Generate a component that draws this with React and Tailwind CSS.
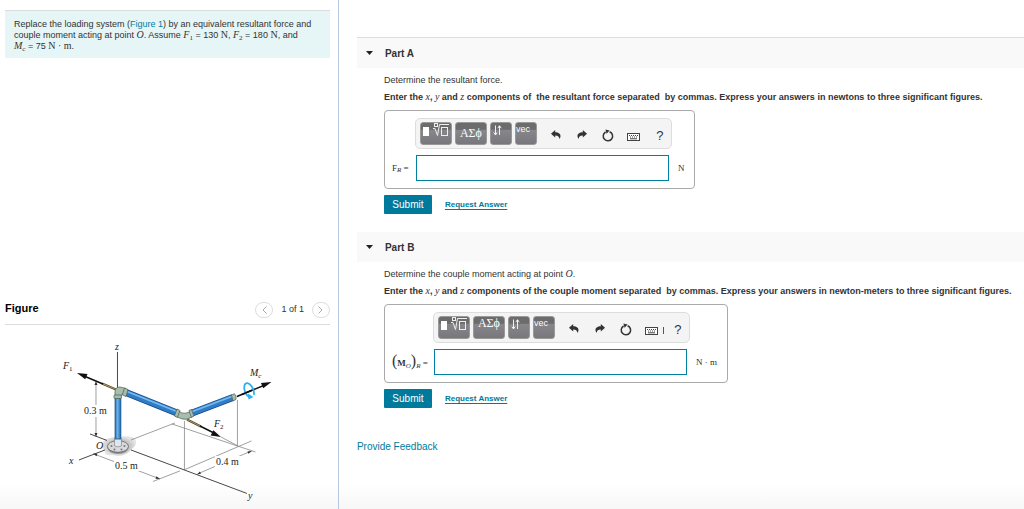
import React from 'react'

const Sym = ({ children, sub }) => (
  <span className="font-['Liberation_Serif',serif] text-[10px] leading-none font-normal">
    <i>{children}</i>
    {sub && <sub className="text-[7px] leading-[0px]">{sub}</sub>}
  </span>
)

const Unit = ({ children }) => (
  <span className="font-['Liberation_Serif',serif] text-[10px] leading-none">
    {children}
  </span>
)

const UndoIcon = ({ flip }) => (
  <svg
    width="10"
    height="10"
    viewBox="0 0 10 10"
    className={flip ? '-scale-x-100' : ''}
  >
    <path
      d="M0 3.8 4.200 0v2.200c3.400 0 5.600 1.700 5.300 4.400-.1 1-.5 1.700-1.300 2.400.2-2.200-1-3.600-4-3.600v2.200z"
      fill="#333"
    />
  </svg>
)

const ResetIcon = () => (
  <svg width="12" height="13" viewBox="0 0 12 13">
    <path
      d="M7.600 2.700A4.700 4.700 0 1 1 3.600 3"
      fill="none"
      stroke="#333"
      strokeWidth="1.500"
    />
    <path d="M3.400.4 7.600 1.400 4.600 4.800z" fill="#333" />
  </svg>
)

const KeyboardIcon = () => (
  <svg width="13" height="8" viewBox="0 0 13 8">
    <rect x="0.5" y="0.5" width="12" height="7" fill="#fff" stroke="#444" />
    <path
      d="M2 2.500h9M3 4h8"
      stroke="#444"
      strokeWidth="1"
      strokeDasharray="1 1"
    />
    <path d="M3 5.800h7" stroke="#444" strokeWidth="1" />
  </svg>
)

const TemplateIcon = () => (
  <svg width="28" height="16" viewBox="0 0 28 16">
    <rect x="1" y="4" width="6" height="9" fill="#fff" />
    <g fill="none" stroke="#eee" strokeWidth="1">
      <path d="M11 5.500h2l2.500 7 2-11H27" />
      <rect x="12.5" y="0.5" width="3" height="3" />
      <rect x="19.5" y="4.5" width="6" height="8" />
    </g>
  </svg>
)

const ArrowsIcon = () => (
  <svg width="9" height="11" viewBox="0 0 9 11">
    <path
      d="M2.500 0.500v9M0.800 7.500 2.500 10l1.700-2.500M6.500 10V1M4.800 3.200 6.500 0.700 8.200 3.200"
      fill="none"
      stroke="#fff"
      strokeWidth="0.9"
    />
  </svg>
)

const KEY =
  'flex h-[23px] rounded-[3px] border border-[#999] bg-linear-to-b from-[#6c6c6c] from-30% via-[#86868b] via-35% to-[#77777c] text-white'
const TOOL = 'flex w-[26px] items-center justify-center'

const Toolbar = ({ greekClass, divider }) => (
  <div className="flex h-[31px] items-center rounded-[5px] border border-[#ddd] bg-[#f4f4f4] pl-1">
    <div className="flex gap-[3px]">
      <button
        className={`${KEY} w-8 items-start justify-center`}
        aria-label="Templates"
      >
        <TemplateIcon />
      </button>
      <button
        className={`${KEY} ${greekClass} w-8 justify-center font-['Liberation_Serif',serif] text-[12px] leading-[13px]`}
      >
        ΑΣϕ
      </button>
      <button
        className={`${KEY} w-[22px] items-start pt-[2px] pl-[2px]`}
        aria-label="Arrows"
      >
        <ArrowsIcon />
      </button>
      <button
        className={`${KEY} w-[22px] items-start text-[9px] leading-[13px]`}
      >
        vec
      </button>
    </div>
    <div className="ml-[6px] flex h-[23px] pt-[3px] text-[#333]">
      <button className={TOOL} aria-label="Undo">
        <UndoIcon />
      </button>
      <button className={TOOL} aria-label="Redo">
        <UndoIcon flip />
      </button>
      <button className={TOOL} aria-label="Reset">
        <ResetIcon />
      </button>
      <button
        className={`${TOOL} relative pt-[3px]`}
        aria-label="Keyboard shortcuts"
      >
        <KeyboardIcon />
        {divider && (
          <span className="absolute top-2 right-px h-[7px] w-px bg-[#555]" />
        )}
      </button>
      <button className={`${TOOL} text-[13px]`} aria-label="Help">
        ?
      </button>
    </div>
  </div>
)

const Part = ({
  id,
  title,
  prompt,
  instructions,
  label,
  labelClass,
  unit,
  headerClass,
  greekClass,
  divider,
}) => (
  <section>
    <h2
      className={`${headerClass} flex items-center bg-[#f9f9f9] text-[10px] font-bold`}
    >
      <button className="flex w-7 items-center pl-[9px]" aria-label="Collapse">
        <svg width="7" height="4" viewBox="0 0 7 4">
          <path d="M0 0h7L3.500 4z" fill="#222" />
        </svg>
      </button>
      {title}
    </h2>
    <div className="pl-[27px] text-[9px] leading-[11px] whitespace-nowrap">
      <p className="mt-[7px] h-[11px]">{prompt}</p>
      <p className="mt-[6px] h-[11px] font-bold">{instructions}</p>
      <div className="mt-[7px] flex w-fit rounded-[4px] border border-[#aaa] py-[7px] pl-[7px]">
        <label
          htmlFor={id}
          className={`${labelClass} flex h-[26px] items-center self-end font-['Liberation_Serif',serif]`}
        >
          {label}
        </label>
        <div className="w-[257px]">
          <Toolbar greekClass={greekClass} divider={divider} />
          <div className="mt-[6px] pr-[3px] pl-px">
            <input
              id={id}
              type="text"
              className="block h-[26px] w-full border border-[#007fa3] bg-white px-1 text-[11px] outline-none"
            />
          </div>
        </div>
        <span className="flex h-[26px] items-center self-end pr-[10px] pl-[6px] font-['Liberation_Serif',serif] text-[9px]">
          {unit}
        </span>
      </div>
      <div className="mt-[6px] flex items-center gap-[13px]">
        <button className="h-[19px] w-12 rounded-[1px] bg-[#007a9c] text-[10px] text-white">
          Submit
        </button>
        <a
          href="#answer"
          className="text-[8px] font-bold text-[#007a9c] underline underline-offset-2"
        >
          Request Answer
        </a>
      </div>
    </div>
  </section>
)

const PipeFigure = () => (
  <svg
    viewBox="5 325 325 184"
    className="block h-auto w-full"
    role="img"
    aria-label="Pipe assembly with loads"
  >
    <defs>
      <linearGradient id="pipeV" x1="0" x2="1" y1="0" y2="0">
        <stop offset="0" stopColor="#1f65ad" />
        <stop offset="0.4" stopColor="#6db4ea" />
        <stop offset="1" stopColor="#2168ad" />
      </linearGradient>
      <radialGradient id="ground">
        <stop offset="0.5" stopColor="#bbb" />
        <stop offset="1" stopColor="#e4e4e4" />
      </radialGradient>
    </defs>

    {/* ground */}
    <path
      d="M102 445c1-6 8-8 14-8 8-1 19-2 20 4 1 4-3 7-6 10-5 5-12 6-17 4-6 1-9-1-8-4-2-1-3-4-3-6z"
      fill="url(#ground)"
    />

    {/* axes and dimension lines */}
    <g stroke="#333" strokeWidth="0.9" fill="none">
      <path d="M117.500 352v36" />
      <path d="M79 460l26-10" />
      <path d="M131 450l116 43.500" />
      <path d="M90 434l17 6.500" />
    </g>
    <g stroke="#777" strokeWidth="0.7" fill="none">
      <path d="M131 440l44-17M172 424l65.500 22M221 437l17 9M237.500 446l18 6" />
      <path d="M184.500 421v49M237.500 400v46M184 470l67.500-29" />
      <path d="M96 384v50M94 454l66 25M153 481.500l27-10.500M197.500 474l54-23" />
    </g>
    <g fill="#333">
      <path d="M96 381l-1.500 4h3zM96 437l-1.500-4h3z" />
      <path d="M93 453.500l4.500.3-1 2.400zM160 479l-4.500-.3 1-2.500z" />
      <path d="M197 474.500l3-3 1 2.200zM252 451l-4.500.5 1 2.200z" />
    </g>
    <g fill="#fff">
      <rect x="83" y="405" width="25" height="12" />
      <rect x="114" y="460" width="26" height="11" />
      <rect x="215" y="456" width="26" height="12" />
    </g>

    {/* flange */}
    <ellipse cx="118" cy="448" rx="10.500" ry="6" fill="#8c8f93" />
    <ellipse
      cx="118"
      cy="446.500"
      rx="10.500"
      ry="5.800"
      fill="#d7d9db"
      stroke="#555"
      strokeWidth="0.7"
    />
    <g fill="#777">
      <circle cx="111.500" cy="446" r="1" />
      <circle cx="114.500" cy="449.500" r="1" />
      <circle cx="121.500" cy="449.500" r="1" />
      <circle cx="124.500" cy="446" r="1" />
    </g>
    <path
      d="M114.500 439h7v7q-3.500 2-7 0z"
      fill="#dfe6ee"
      stroke="#777"
      strokeWidth="0.6"
    />

    {/* pipes */}
    <rect
      x="115"
      y="397"
      width="6"
      height="42"
      fill="url(#pipeV)"
      stroke="#174a80"
      strokeWidth="0.6"
    />
    <g fill="none">
      <path d="M126 392.500l51 20.500" stroke="#174a80" strokeWidth="7" />
      <path d="M126 392.500l51 20.500" stroke="#2f7cc8" strokeWidth="5.600" />
      <path d="M126.500 391.300l51 20.500" stroke="#78bcee" strokeWidth="1.600" />
      <path d="M191 413.500l42-16" stroke="#174a80" strokeWidth="7" />
      <path d="M191 413.500l42-16" stroke="#2f7cc8" strokeWidth="5.600" />
      <path d="M190.500 412.300l42-16" stroke="#78bcee" strokeWidth="1.600" />
    </g>

    {/* applied force rods */}
    <path
      d="M102 383.500l14 6M187 419.500l14 7"
      stroke="#4d4022"
      strokeWidth="2.200"
    />
    <path
      d="M102 383.500l14 6M187 419.500l14 7"
      stroke="#b59b5c"
      strokeWidth="1"
    />

    {/* elbows */}
    <g fill="#a5beae" stroke="#4a5d52" strokeWidth="0.7">
      <path d="M115 396v-4q0-5 5-5l6 1.500-1.500 5.500q-3-1-3 2z" />
      <rect x="114" y="395" width="7.500" height="3.500" rx="1" />
      <path d="M124.500 388l3.500 1.500-2 7-3.500-1.500z" />
      <path d="M177 410l5 3q3 1 8-1l2 5q-5 3.500-10 2l-7-3z" />
      <path d="M177 409l3 1.500-2.500 7-3-1.500zM189 410.500l2.500-1 2.500 6.500-2.500 1.500z" />
      <path d="M231.500 395l3-1.200q2.500 2.500 1.500 5.700l-3 1.500z" />
    </g>

    {/* load arrows, moment ring round the last one */}
    <path
      d="M84 376l19 8M200 426l15 7.500M237 396.500l28-11.500"
      stroke="#111"
      strokeWidth="1.500"
    />
    <g fill="#111">
      <path d="M77 373l10.500 1-2.300 5.300z" />
      <path d="M221 437l-10.300-1.500 2.800-5.300z" />
      <path d="M271.500 382l-8.200 6.300-2.300-5.200z" />
    </g>
    <path
      d="M250 397c-4-1-6.500-7-5.500-11.500 1-3.500 4.500-3 7 .500 2 3 3 6 2.500 9"
      fill="none"
      stroke="#2db0ea"
      strokeWidth="1.800"
    />
    <path d="M248 393.500l5.500 3.500-5 2.500z" fill="#2db0ea" />
    <path d="M242 394.500l10-4.200" stroke="#111" strokeWidth="1.500" />

    <g className="font-['Liberation_Serif',serif] text-[10px]" fill="#222">
      <text x="115" y="350" fontStyle="italic">z</text>
      <text x="69" y="464" fontStyle="italic">x</text>
      <text x="248" y="499" fontStyle="italic">y</text>
      <text x="96" y="449" fontStyle="italic">O</text>
      <text x="63" y="369">
        <tspan fontStyle="italic">F</tspan>
        <tspan dy="2" className="text-[7px]">1</tspan>
      </text>
      <text x="214" y="427">
        <tspan fontStyle="italic">F</tspan>
        <tspan dy="2" className="text-[7px]">2</tspan>
      </text>
      <text x="250" y="376" fontStyle="italic">
        M<tspan dy="2" className="text-[7px]">c</tspan>
      </text>
      <text x="84" y="414">0.3 m</text>
      <text x="115" y="469">0.5 m</text>
      <text x="216" y="465">0.4 m</text>
    </g>
  </svg>
)

const PAGER =
  'flex h-4 w-[18px] items-center justify-center rounded-full border border-[#ddd]'

const App = () => {
  return (
    <div className="grid min-h-screen grid-cols-[33fr_67fr] bg-white bg-linear-to-b from-white from-95% to-[#f7f7f7] font-['Liberation_Sans',Arial,sans-serif] text-[#333]">
      <aside className="flex flex-col pt-[10px] pr-2 pl-[5px]">
        <p className="border-t border-[#d8dcdc] bg-[#e6f5f6] px-[9px] pt-2 pb-[6px] text-[9px] leading-[11px] text-[#333]">
          Replace the loading system (
          <a href="#figure" className="text-[#007fa3]">
            Figure 1
          </a>
          ) by an equivalent resultant force and couple moment acting at point{' '}
          <Sym>O</Sym>. Assume <Sym sub="1">F</Sym> = 130 <Unit>N</Unit>,{' '}
          <Sym sub="2">F</Sym> = 180 <Unit>N</Unit>, and{' '}
          <span className="whitespace-nowrap">
            <Sym sub="c">M</Sym> = 75 <Unit>N · m</Unit>.
          </span>
        </p>

        <section id="figure" className="mt-auto">
          <div className="flex h-[25px] items-start justify-between border-b border-[#ddd]">
            <h2 className="text-[11px] leading-4 font-bold text-black">
              Figure
            </h2>
            <div className="flex items-center gap-2 pt-[2px] text-[9px]">
              <button className={PAGER} aria-label="Previous figure">
                <svg width="5" height="8" viewBox="0 0 5 8">
                  <path
                    d="M4.500 0.500 1 4l3.500 3.500"
                    fill="none"
                    stroke="#aaa"
                  />
                </svg>
              </button>
              <span>1 of 1</span>
              <button className={PAGER} aria-label="Next figure">
                <svg width="5" height="8" viewBox="0 0 5 8">
                  <path
                    d="M0.500 0.500 4 4 0.500 7.500"
                    fill="none"
                    stroke="#aaa"
                  />
                </svg>
              </button>
            </div>
          </div>
          <PipeFigure />
        </section>
      </aside>

      <main className="min-w-0 overflow-hidden border-l border-[#b4c8de] pt-[37px] pl-[18px]">
        <Part
          id="force"
          title="Part A"
          headerClass="h-[31px] border-t border-[#ddd]"
          prompt="Determine the resultant force."
          instructions={
            <>
              Enter the <Sym>x</Sym>, <Sym>y</Sym> and <Sym>z</Sym> components
              of &nbsp;the resultant force separated &nbsp;by commas. Express
              your answers in newtons to three significant figures.
            </>
          }
          label={
            <span>
              F<sub className="text-[7px] italic">R</sub> =
            </span>
          }
          labelClass="w-[23px]"
          unit="N"
          greekClass="items-center"
        />
        <div className="mt-[18px]">
          <Part
            id="moment"
            title="Part B"
            headerClass="h-[30px]"
            prompt={
              <>
                Determine the couple moment acting at point <Sym>O</Sym>.
              </>
            }
            instructions={
              <>
                Enter the <Sym>x</Sym>, <Sym>y</Sym> and <Sym>z</Sym> components
                of the couple moment separated &nbsp;by commas. Express your
                answers in newton-meters to three significant figures.
              </>
            }
            label={
              <span>
                <span className="text-[16px]">(</span>
                <b>M</b>
                <sub className="text-[7px] italic">O</sub>
                <span className="text-[16px]">)</span>
                <sub className="text-[7px] italic">R</sub> =
              </span>
            }
            labelClass="w-[41px]"
            unit="N · m"
            greekClass="items-start"
            divider
          />
        </div>
        <a
          href="#feedback"
          className="mt-8 inline-block text-[10px] leading-[14px] text-[#007a9c]"
        >
          Provide Feedback
        </a>
      </main>
    </div>
  )
}

export default App
